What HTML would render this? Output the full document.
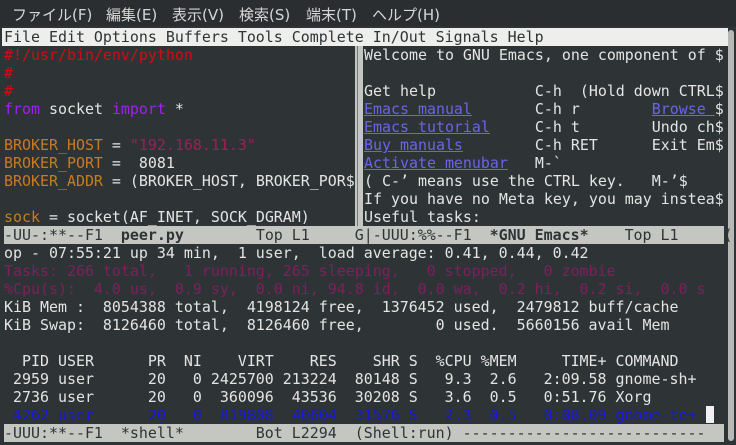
<!DOCTYPE html>
<html><head><meta charset="utf-8"><style>
body{margin:0;width:736px;height:445px;background:#2e3436;overflow:hidden;position:relative;font-family:"DejaVu Sans Mono","Liberation Mono",monospace}
.top{position:absolute;left:0;top:0;width:736px;height:26px;background:#2b2e30}
.jm{position:absolute;top:4px;font:15px "DejaVu Sans","Noto Sans CJK JP",sans-serif;color:#d6d6d6}
.term{position:absolute;left:0;top:26px;width:727px;height:419px;background:#2e3436}
.r{position:absolute;left:4px;height:18px;line-height:18px;font-size:14.95px;white-space:pre;color:#e4e4e2}
.mb{background:#eeeeec;color:#2e3436;left:2px;width:724px;padding-left:2px;left:2px}
.ml{background:#c4c6c1;color:#2e3436;width:720px}
.sep{position:absolute;left:355px;width:8px;background:#c4c6c1}
.sep:after{content:"";position:absolute;left:2px;top:0;bottom:0;width:1px;background:#777}
.red{color:#cc1010}.pur{color:#a020f0}.or{color:#c87a20}.str{color:#9b1f5a}
.lk{color:#6b63ea;text-decoration:underline}
.mag{color:#7e1f5e}.blu{color:#1818d8}
b{font-weight:bold}
.sb{position:absolute;left:727px;top:26px;width:9px;height:419px;background:#2e3436}
.th{position:absolute;left:728px;top:30px;width:6px;height:411px;background:#b8b8b6;border-radius:3px}
.cur{position:absolute;left:706px;top:406px;width:8px;height:17px;background:#f0f0f0}
</style></head><body>
<div class="top"></div>
<span class="jm" style="left:12px">ファイル(F)</span>
<span class="jm" style="left:106px">編集(E)</span>
<span class="jm" style="left:172px">表示(V)</span>
<span class="jm" style="left:239px">検索(S)</span>
<span class="jm" style="left:306px">端末(T)</span>
<span class="jm" style="left:372px">ヘルプ(H)</span>
<div class="term"></div>
<div class="sb"></div><div class="th"></div>
<div class="r mb" style="top:28px">File Edit Options Buffers Tools Complete In/Out Signals Help</div>
<div class="sep" style="top:46px;height:180px"></div>
<div class="r" style="top:46px"><span class="red">#!/usr/bin/env/python</span></div>
<div class="r" style="top:64px"><span class="red">#</span></div>
<div class="r" style="top:82px"><span class="red">#</span></div>
<div class="r" style="top:100px"><span class="pur">from</span> socket <span class="pur">import</span> *</div>
<div class="r" style="top:136px"><span class="or">BROKER_HOST</span> = <span class="str">"192.168.11.3"</span></div>
<div class="r" style="top:154px"><span class="or">BROKER_PORT</span> =  8081</div>
<div class="r" style="top:172px"><span class="or">BROKER_ADDR</span> = (BROKER_HOST, BROKER_POR$</div>
<div class="r" style="top:208px"><span class="or">sock</span> = socket(AF_INET, SOCK_DGRAM)</div>
<div class="r" style="top:46px;left:364px">Welcome to GNU Emacs, one component of $</div>
<div class="r" style="top:82px;left:364px">Get help           C-h  (Hold down CTRL$</div>
<div class="r" style="top:100px;left:364px"><span class="lk">Emacs manual</span>       C-h r        <span class="lk">Browse </span>$</div>
<div class="r" style="top:118px;left:364px"><span class="lk">Emacs tutorial</span>     C-h t        Undo ch$</div>
<div class="r" style="top:136px;left:364px"><span class="lk">Buy manuals</span>        C-h RET      Exit Em$</div>
<div class="r" style="top:154px;left:364px"><span class="lk">Activate menubar</span>   M-`</div>
<div class="r" style="top:172px;left:364px">( C-’ means use the CTRL key.   M-’$</div>
<div class="r" style="top:190px;left:364px">If you have no Meta key, you may instea$</div>
<div class="r" style="top:208px;left:364px">Useful tasks:</div>
<div class="r ml" style="top:226px">-UU-:**--F1  <b>peer.py</b>        Top L1     G|-UUU:%%--F1  <b>*GNU Emacs*</b>    Top L1     (</div>
<div class="r" style="top:244px">op - 07:55:21 up 34 min,  1 user,  load average: 0.41, 0.44, 0.42</div>
<div class="r mag" style="top:262px">Tasks: 266 total,   1 running, 265 sleeping,   0 stopped,   0 zombie</div>
<div class="r mag" style="top:280px">%Cpu(s):  4.0 us,  0.9 sy,  0.0 ni, 94.8 id,  0.0 wa,  0.2 hi,  0.2 si,  0.0 s</div>
<div class="r" style="top:298px">KiB Mem :  8054388 total,  4198124 free,  1376452 used,  2479812 buff/cache</div>
<div class="r" style="top:316px">KiB Swap:  8126460 total,  8126460 free,        0 used.  5660156 avail Mem</div>
<div class="r" style="top:352px">  PID USER      PR  NI    VIRT    RES    SHR S  %CPU %MEM     TIME+ COMMAND</div>
<div class="r" style="top:370px"> 2959 user      20   0 2425700 213224  80148 S   9.3  2.6   2:09.58 gnome-sh+</div>
<div class="r" style="top:388px"> 2736 user      20   0  360096  43536  30208 S   3.6  0.5   0:51.76 Xorg</div>
<div class="r blu" style="top:406px"> 4262 user      20   0  819808  40604  31576 S   2.3  0.5   0:08.09 gnome-te+</div>
<div class="cur"></div>
<div class="r ml" style="top:424px">-UUU:**--F1  *shell*        Bot L2294  (Shell:run) ---------------------------</div>
</body></html>
